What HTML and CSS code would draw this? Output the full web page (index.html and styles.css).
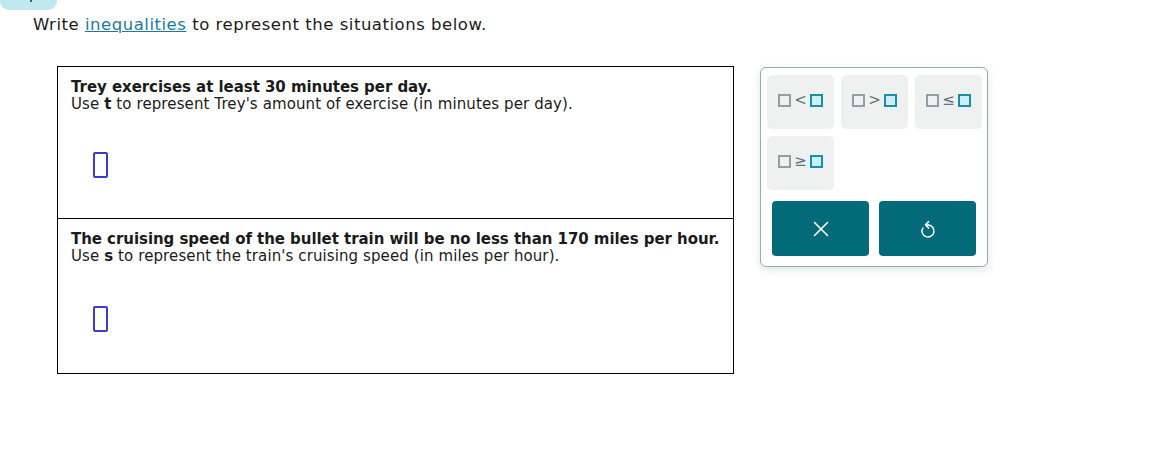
FILE: index.html
```html
<!DOCTYPE html>
<html>
<head>
<meta charset="utf-8">
<link rel="stylesheet" href="styles.css">
</head>
<body>
<div class="tab"><span class="tab-mark"></span></div>
<p class="intro">Write <a class="link" href="#">inequalities</a> to represent the situations below.</p>
<div class="workspace">
  <div class="problems">
    <div class="cell cell-1">
      <div class="q-title">Trey exercises at least 30 minutes per day.</div>
      <div class="q-text">Use <b>t</b> to represent Trey's amount of exercise (in minutes per day).</div>
      <div class="answer"><span class="ansbox"></span></div>
    </div>
    <div class="cell cell-2">
      <div class="q-title">The cruising speed of the bullet train will be no less than 170 miles per hour.</div>
      <div class="q-text">Use <b>s</b> to represent the train's cruising speed (in miles per hour).</div>
      <div class="answer"><span class="ansbox"></span></div>
    </div>
  </div>
  <div class="palette">
    <div class="sym-grid">
      <button class="sym"><span class="sq-a"></span><span class="op">&lt;</span><span class="sq-b"></span></button>
      <button class="sym"><span class="sq-a"></span><span class="op">&gt;</span><span class="sq-b"></span></button>
      <button class="sym"><span class="sq-a"></span><span class="op">&le;</span><span class="sq-b"></span></button>
      <button class="sym"><span class="sq-a"></span><span class="op">&ge;</span><span class="sq-b"></span></button>
    </div>
    <div class="actions">
      <button class="act">
        <svg width="16" height="16" viewBox="0 0 16 16"><path d="M1 1 L15 15 M15 1 L1 15" stroke="#fff" stroke-width="1.6" fill="none"/></svg>
      </button>
      <button class="act">
        <svg width="16" height="20" viewBox="0 0 16 20"><path d="M8 6 A6 6 0 1 1 2.8 9" stroke="#fff" stroke-width="1.5" fill="none" stroke-linecap="round"/><path d="M8.6 2.6 L5.4 5.8 L8.6 9" stroke="#fff" stroke-width="1.5" fill="none" stroke-linecap="round" stroke-linejoin="round"/><path d="M5.6 5.9 L8 6" stroke="#fff" stroke-width="1.5" fill="none" stroke-linecap="round"/></svg>
      </button>
    </div>
  </div>
</div>
</body>
</html>
```
FILE: styles.css
```css
html, body {
  margin: 0;
  padding: 0;
  background: #fff;
}
body {
  font-family: "DejaVu Sans", Verdana, sans-serif;
  color: #1b1b1b;
}
.tab {
  width: 57px;
  height: 10px;
  background: #c2e8ef;
  border-radius: 0 0 9px 9px;
  position: relative;
}
.tab-mark {
  position: absolute;
  left: 30px;
  top: 0;
  width: 2px;
  height: 2px;
  background: #1b6f80;
}
.intro {
  margin: 5px 0 0 33px;
  font-size: 16.5px;
  letter-spacing: 0.52px;
  line-height: 20px;
}
.link {
  color: #1a7a9a;
  text-decoration: underline;
}
.workspace {
  display: flex;
  align-items: flex-start;
  margin: 31px 0 0 57px;
  gap: 26px;
}
.problems {
  width: 675px;
  border: 1px solid #000;
}
.cell {
  padding: 12px 13px 0 13px;
  box-sizing: border-box;
}
.cell-1 {
  height: 152px;
  border-bottom: 1px solid #000;
}
.cell-2 {
  height: 154px;
  padding-top: 12px;
}
.q-title {
  font-size: 15px;
  font-weight: bold;
  letter-spacing: -0.05px;
  line-height: 17px;
  white-space: nowrap;
}
.q-text {
  font-size: 15px;
  letter-spacing: 0.1px;
  line-height: 17px;
}
.answer {
  margin: 39px 0 0 22px;
}
.cell-2 .answer {
  margin-top: 41px;
}
.ansbox {
  display: block;
  width: 11px;
  height: 22px;
  border: 2px solid #3b3bd0;
  border-radius: 2px;
}
.palette {
  margin-top: 1px;
  width: 228px;
  box-sizing: border-box;
  border: 1px solid #95aab1;
  border-radius: 6px;
  padding: 7px 5px 10px 6px;
  box-shadow: 0 3px 8px rgba(90, 110, 120, 0.18);
  background: #fff;
}
.sym-grid {
  display: grid;
  grid-template-columns: repeat(3, 67px);
  grid-auto-rows: 54px;
  gap: 7px 7px;
}
.sym {
  border: none;
  background: #eff1f1;
  border-radius: 5px;
  display: flex;
  align-items: center;
  justify-content: center;
  padding: 0 0 4px 0;
  gap: 1px;
}
.sq-a {
  width: 9px;
  height: 9px;
  border: 2px solid #8fa1a6;
}
.sq-b {
  width: 9px;
  height: 9px;
  border: 2px solid #1791a8;
  background: #cdeef4;
}
.op {
  font-family: "DejaVu Sans", sans-serif;
  font-size: 15px;
  color: #5f747b;
  line-height: 14px;
  margin: 0 2px;
}
.actions {
  display: flex;
  gap: 10px;
  margin-top: 11px;
  padding-left: 5px;
}
.act {
  width: 97px;
  height: 55px;
  border: none;
  border-radius: 4px;
  background: #026a79;
  display: flex;
  align-items: center;
  justify-content: center;
  padding: 0;
}
```
